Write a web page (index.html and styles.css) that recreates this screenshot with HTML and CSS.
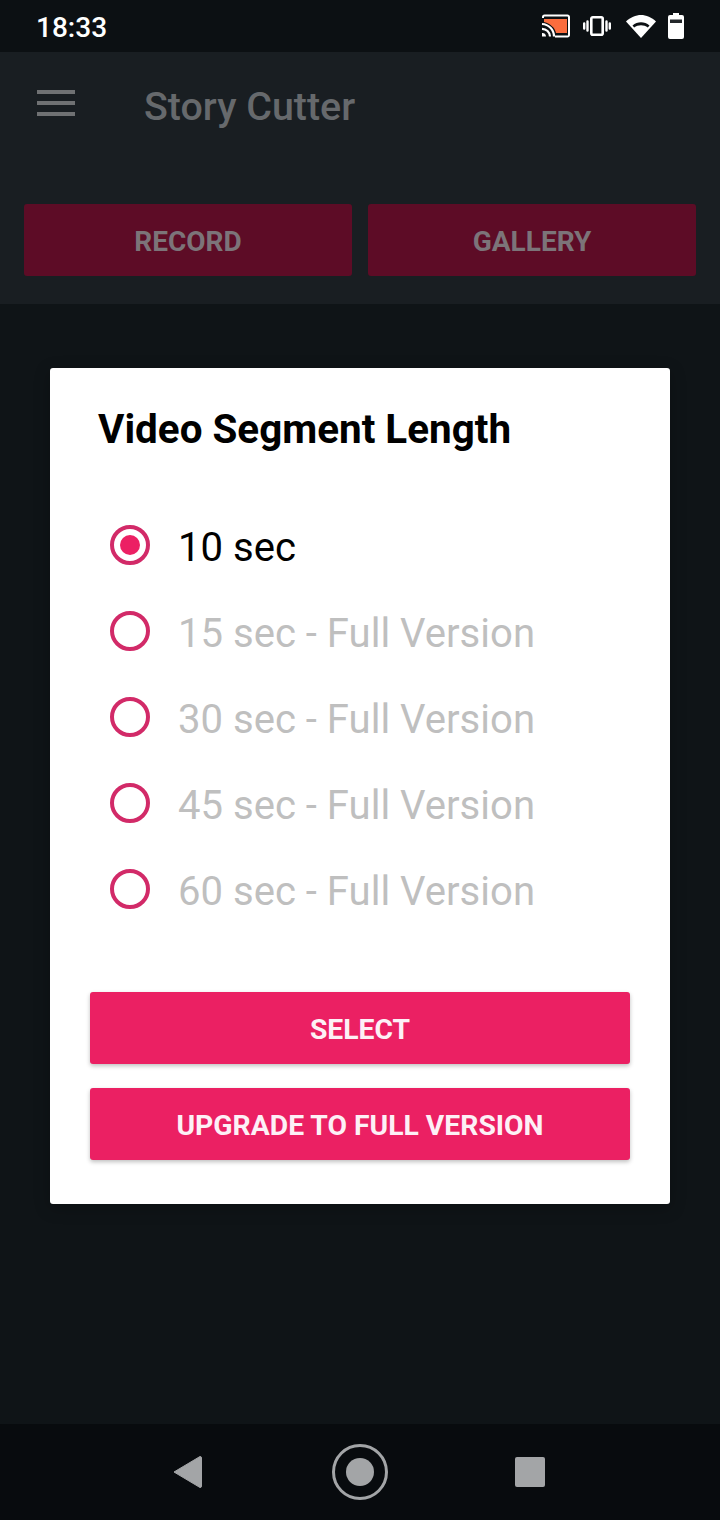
FILE: index.html
```html
<!DOCTYPE html>
<html lang="en">
<head>
<meta charset="utf-8">
<title>Story Cutter</title>
<link rel="stylesheet" href="styles.css">
</head>
<body>
<div class="screen">
  <header class="status">
    <span class="time">18:33</span>
    <div class="status-icons">
      <svg class="ic-cast" width="30" height="24" viewBox="0 0 30 24"><path d="M3 5h23v14H15c-1-5-5-9-12-11z" fill="#fb6d3e"/><path d="M2 4V3a1.500 1.500 0 0 1 1.500-1.500h23A1.500 1.500 0 0 1 28 3v18a1.500 1.500 0 0 1-1.500 1.500H14" fill="none" stroke="#fff" stroke-width="2"/><path d="M1 22.500h4a3.500 3.500 0 0 0-4-3.500z" fill="#fff"/><path d="M1 14.800a8 8 0 0 1 8 7.700M1 10a12.500 12.500 0 0 1 12 12.500" fill="none" stroke="#fff" stroke-width="2.200"/></svg>
      <svg class="ic-vib" width="28" height="24" viewBox="0 0 28 24"><rect x="8.300" y="3.300" width="11.400" height="17.400" rx="1.500" fill="none" stroke="#fff" stroke-width="2.600"/><path d="M4.500 7.500v9M1.200 9.500v5M23.500 7.500v9M26.800 9.500v5" stroke="#fff" stroke-width="2.400" stroke-linecap="round"/></svg>
      <svg class="ic-wifi" width="30" height="24" viewBox="0 0 30 24"><path d="M0 7.500C4 3.500 10 1 15 1s11 2.500 15 6.500L15 24z" fill="#fff"/><path d="M6.500 11.500C9 9.300 12 8.300 15 8.300s6 1 8.500 3.200l-1.700 2C19.800 12 17.500 11.300 15 11.300s-4.800.7-6.800 2.200z" fill="#0c1013"/></svg>
      <svg class="ic-batt" width="16" height="26" viewBox="0 0 16 26"><path d="M5 0h6v2h3a2 2 0 0 1 2 2v20a2 2 0 0 1-2 2H2a2 2 0 0 1-2-2V4a2 2 0 0 1 2-2h3z" fill="#fff"/><rect x="2" y="6.500" width="12" height="3.500" fill="#23272a"/></svg>
    </div>
  </header>
  <section class="appbar">
    <div class="toolbar">
      <div class="burger"><i></i><i></i><i></i></div>
      <h1 class="app-title">Story Cutter</h1>
    </div>
    <div class="actions">
      <div class="dim-btn">RECORD</div>
      <div class="dim-btn">GALLERY</div>
    </div>
  </section>
  <main class="content">
    <div class="dialog">
      <h2 class="dialog-title">Video Segment Length</h2>
      <ul class="options">
        <li class="option"><span class="radio checked"></span><span class="label active">10 sec</span></li>
        <li class="option"><span class="radio"></span><span class="label">15 sec - Full Version</span></li>
        <li class="option"><span class="radio"></span><span class="label">30 sec - Full Version</span></li>
        <li class="option"><span class="radio"></span><span class="label">45 sec - Full Version</span></li>
        <li class="option"><span class="radio"></span><span class="label">60 sec - Full Version</span></li>
      </ul>
      <div class="dialog-actions">
        <button class="btn">SELECT</button>
        <button class="btn">UPGRADE TO FULL VERSION</button>
      </div>
    </div>
  </main>
  <nav class="navbar">
    <svg class="nav-back" width="30" height="34" viewBox="0 0 30 34"><path d="M27 1.500a1.500 1.500 0 0 1 1.500 1.500v28a1.500 1.500 0 0 1-1.500 1.500L1 17z" fill="#a3a5a7" stroke="#a3a5a7" stroke-linejoin="round"/></svg>
    <div class="nav-home"><span></span></div>
    <div class="nav-recent"></div>
  </nav>
</div>
</body>
</html>
```
FILE: styles.css
```css
* { box-sizing: border-box; }
html, body { margin: 0; padding: 0; }
body { font-family: Roboto, "Liberation Sans", sans-serif; background: #0f1417; }
.screen { width: 720px; height: 1520px; display: flex; flex-direction: column; overflow: hidden; }

.status { height: 52px; flex: none; background: #0c1013; display: flex; align-items: center; justify-content: space-between; padding: 0 36px; }
.time { color: #fff; font-size: 28px; font-weight: 500; position: relative; top: 1px; }
.status-icons { display: flex; align-items: center; }
.ic-cast { margin-right: 12px; }
.ic-vib { margin-right: 15px; }
.ic-wifi { margin-right: 12px; }

.appbar { height: 252px; flex: none; background: #191e22; padding: 0 24px; }
.toolbar { height: 152px; display: flex; align-items: flex-start; }
.burger { width: 38px; margin: 38px 0 0 13px; display: flex; flex-direction: column; gap: 7px; }
.burger i { display: block; height: 4px; background: #6f7173; }
.app-title { margin: 32px 0 0 69px; color: #66696c; font-size: 39.4px; line-height: 46px; font-weight: 500; }
.actions { display: flex; gap: 16px; }
.dim-btn { flex: 1; height: 72px; padding-top: 2px; border-radius: 3px; background: #5d0c26; color: #7c7479; font-size: 28px; font-weight: 700; display: flex; align-items: center; justify-content: center; }

.content { flex: 1; display: flex; flex-direction: column; padding: 64px 50px 0; }
.dialog { height: 836px; background: #fff; border-radius: 3px; padding: 35px 40px 0; box-shadow: 0 4px 16px rgba(0,0,0,.25); }
.dialog-title { margin: 0 0 0 8px; color: #000; font-size: 40.4px; line-height: 54px; font-weight: 700; }
.options { list-style: none; margin: 45px 0 0; padding: 0; }
.option { height: 86px; display: flex; align-items: center; padding-left: 20px; }
.radio { width: 40px; height: 40px; border-radius: 50%; border: 4px solid #d22a68; flex: none; display: flex; align-items: center; justify-content: center; }
.radio.checked::after { content: ""; width: 20px; height: 20px; border-radius: 50%; background: #ec2064; }
.label { margin-left: 28px; font-size: 40.1px; color: #bfbfbf; position: relative; top: 2px; }
.label.active { color: #000; }
.dialog-actions { margin-top: 60px; display: flex; flex-direction: column; gap: 24px; }
.btn { height: 72px; border: 0; border-radius: 3px; background: #eb2063; color: #fdf0f6; font-family: inherit; font-size: 28.3px; font-weight: 700; box-shadow: 0 2px 4px rgba(0,0,0,.25); padding: 2px 0 0; }

.navbar { height: 96px; flex: none; background: #080b0e; display: flex; align-items: center; position: relative; padding: 0 0 0 173px; }
.nav-back { flex: none; margin-right: 129px; }
.nav-home { width: 56px; height: 56px; border: 3px solid #a3a5a7; border-radius: 50%; display: flex; align-items: center; justify-content: center; flex: none; margin-right: 127px; }
.nav-home span { width: 28px; height: 28px; border-radius: 50%; background: #a3a5a7; }
.nav-recent { width: 30px; height: 30px; border-radius: 2px; background: #a3a5a7; flex: none; }
```
